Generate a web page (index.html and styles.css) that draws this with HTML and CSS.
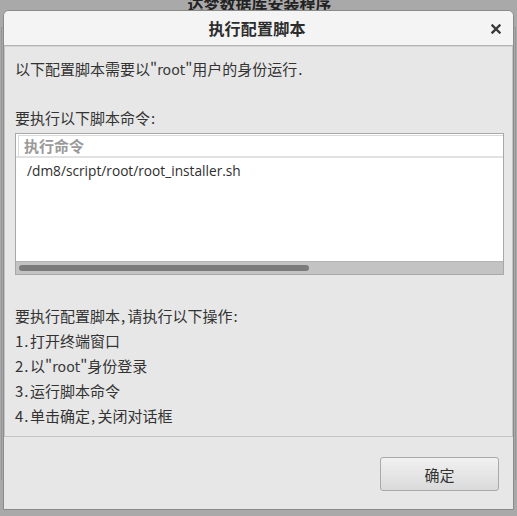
FILE: index.html
```html
<!DOCTYPE html>
<html lang="zh">
<head>
<meta charset="utf-8">
<title>执行配置脚本</title>
<link rel="stylesheet" href="styles.css">
</head>
<body>
<div class="desktop">
  <div class="bg-window">
    <div class="bg-title">达梦数据库安装程序</div>
    <div class="bg-frame"></div>
  </div>

  <div class="dialog">
    <div class="titlebar">
      <span class="title">执行配置脚本</span>
      <button class="close" aria-label="关闭">
        <svg width="10" height="10" viewBox="0 0 10 10"><path d="M1.5 1.5 L8.5 8.5 M8.5 1.5 L1.5 8.5" stroke="#3a3a3a" stroke-width="2.4" stroke-linecap="square"/></svg>
      </button>
    </div>
    <div class="panel">
      <p class="line">以下配置脚本需要以"<span class="lat">root</span>"用户的身份运行<span class="hw">.</span></p>
      <p class="line gap">要执行以下脚本命令<span class="hw">:</span></p>
      <div class="table">
        <div class="thead"><div class="th">执行命令</div></div>
        <div class="tbody">
          <div class="row">/dm8/script/root/root_installer.sh</div>
        </div>
        <div class="hscroll"><div class="thumb"></div></div>
      </div>
      <p class="line gap2">要执行配置脚本<span class="hw">,</span>请执行以下操作<span class="hw">:</span></p>
      <p class="line"><span class="num">1.</span>打开终端窗口</p>
      <p class="line"><span class="num">2.</span>以"<span class="lat">root</span>"身份登录</p>
      <p class="line"><span class="num">3.</span>运行脚本命令</p>
      <p class="line"><span class="num">4.</span>单击确定<span class="hw">,</span>关闭对话框</p>
    </div>
    <div class="footer">
      <button class="btn">确定</button>
    </div>
  </div>
</div>
</body>
</html>
```

FILE: styles.css
```css
html, body {
  margin: 0;
  padding: 0;
}
body {
  width: 517px;
  height: 516px;
  overflow: hidden;
  background: #a9a9a9;
  font-family: "Noto Sans CJK SC", "DejaVu Sans", sans-serif;
}
.desktop {
  position: relative;
  width: 517px;
  height: 516px;
}
.bg-window {
  position: absolute;
  left: 0;
  top: 0;
  width: 517px;
  height: 516px;
}
.bg-title {
  text-align: center;
  font-size: 16px;
  font-weight: bold;
  color: #222;
  line-height: 20px;
  margin-top: -7px;
  padding-left: 2px;
}
.bg-frame {
  position: absolute;
  left: 1px;
  right: 1px;
  top: 27px;
  height: 452px;
  border: 1px solid #959595;
  border-bottom: none;
}
.dialog {
  position: absolute;
  left: 3px;
  top: 10px;
  width: 511px;
  height: 500px;
  box-sizing: border-box;
  border: 1px solid #8a8a8a;
  border-radius: 6px 6px 0 0;
  background: #e7e7e7;
  display: flex;
  flex-direction: column;
}
.titlebar {
  height: 34px;
  flex: none;
  background: #f4f4f4;
  border-radius: 5px 5px 0 0;
  border-bottom: 1px solid #b3b3b3;
  display: flex;
  align-items: center;
  justify-content: center;
  position: relative;
}
.title {
  font-size: 16px;
  font-weight: bold;
  color: #2c2c2c;
  letter-spacing: 0.2px;
  margin-left: -3px;
}
.close {
  position: absolute;
  right: 12px;
  top: 13px;
  width: 10px;
  height: 10px;
  padding: 0;
  border: none;
  background: none;
  display: flex;
}
.panel {
  flex: none;
  height: 391px;
  box-sizing: border-box;
  margin: 0;
  border: 1px solid #c4c4c4;
  border-top-color: #d6d6d6;
  background: #e7e7e7;
  padding: 9px 10px 8px 10px;
  display: flex;
  flex-direction: column;
}
.line {
  margin: 0;
  font-size: 15px;
  line-height: 25px;
  height: 25px;
  color: #333;
  white-space: nowrap;
}
.hw {
  display: inline-block;
  width: 7.5px;
  text-align: left;
  padding-left: 1px;
  box-sizing: border-box;
}
.num {
  display: inline-block;
  width: 15px;
  letter-spacing: 1px;
}
.lat {
  font-family: "DejaVu Sans", sans-serif;
  font-size: 14px;
  color: #3a3a3a;
}
.gap { margin-top: 24px; }
.gap2 { margin-top: 28px; }
.table {
  margin-top: 3px;
  width: 489px;
  height: 142px;
  box-sizing: border-box;
  border: 1px solid #a8a8a8;
  background: #fff;
  display: flex;
  flex-direction: column;
}
.thead {
  height: 24px;
  flex: none;
  padding: 1px 0 0 2px;
  box-sizing: border-box;
  border-bottom: 2px solid #e2e2e2;
}
.th {
  height: 22px;
  box-sizing: border-box;
  border-left: 1px solid #dadada;
  border-top: 1px solid #dadada;
  padding-left: 5px;
  font-size: 15px;
  font-weight: bold;
  line-height: 20px;
  color: #9a9a9a;
}
.tbody {
  flex: 1;
}
.row {
  font-family: "Open Sans", "DejaVu Sans", sans-serif;
  font-size: 13.7px;
  line-height: 24px;
  padding: 1px 0 0 11px;
  color: #2e2e2e;
}
.hscroll {
  height: 13px;
  flex: none;
  box-sizing: border-box;
  background: #c3c3c3;
  border-top: 1px solid #b4b4b4;
  padding: 3px 0 0 3px;
}
.thumb {
  width: 290px;
  height: 6px;
  border-radius: 3px;
  background: #7b7b7b;
}
.footer {
  flex: 1;
  display: flex;
  justify-content: flex-end;
  align-items: flex-start;
  padding: 20px 14px 0 0;
}
.btn {
  width: 119px;
  height: 34px;
  box-sizing: border-box;
  border: 1px solid #a9a9a9;
  border-radius: 3px;
  background: linear-gradient(#f1f1f1, #dadada);
  font-family: "Noto Sans CJK SC", sans-serif;
  font-size: 15px;
  color: #333;
  padding: 0;
}
```
